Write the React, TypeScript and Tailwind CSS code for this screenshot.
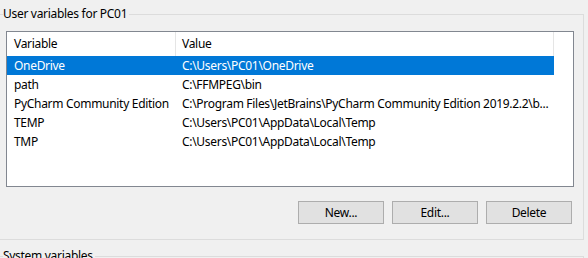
const rows = [
  { name: "OneDrive", value: "C:\\Users\\PC01\\OneDrive", selected: true },
  { name: "path", value: "C:\\FFMPEG\\bin" },
  {
    name: "PyCharm Community Edition",
    value: "C:\\Program Files\\JetBrains\\PyCharm Community Edition 2019.2.2\\b...",
  },
  { name: "TEMP", value: "C:\\Users\\PC01\\AppData\\Local\\Temp" },
  { name: "TMP", value: "C:\\Users\\PC01\\AppData\\Local\\Temp" },
];

function WinButton({ label }: { label: string }) {
  return (
    <button className="h-[23px] w-[86px] border border-[#adadad] bg-[#e1e1e1] text-[12px] text-black">
      {label}
    </button>
  );
}

export default function App() {
  return (
    <div
      className="h-[258px] w-[588px] overflow-hidden bg-[#f0f0f0] text-[12px] tracking-[-0.3px] text-black"
      style={{ fontFamily: "'Noto Sans', sans-serif" }}
    >
      <div className="relative -ml-px mt-[14px] h-[226px] w-[585px] border border-[#dcdcdc]">
        <span className="absolute -top-[9px] left-[3px] bg-[#f0f0f0] pr-[2px] leading-[16px]">
          User variables for PC01
        </span>

        <div className="ml-[6px] mt-[16px] h-[156px] w-[568px] border border-[#828790] bg-white">
          <div className="flex h-[24px] items-center">
            <div className="flex h-full w-[169px] items-center border-r border-[#e5e5e5] pl-[7px]">
              Variable
            </div>
            <div className="flex h-full w-[378px] items-center border-r border-[#e5e5e5] pl-[6px]">
              Value
            </div>
          </div>
          {rows.map((r) => (
            <div
              key={r.name}
              className={`flex h-[19px] w-[547px] items-center whitespace-nowrap ${
                r.selected ? "bg-[#0078d7] text-white" : ""
              }`}
            >
              <div className="w-[169px] overflow-hidden pl-[7px]">{r.name}</div>
              <div className="w-[378px] overflow-hidden pl-[6px]">{r.value}</div>
            </div>
          ))}
        </div>

        <div className="mt-[14px] flex justify-end gap-[8px] pr-[11px]">
          <WinButton label="New..." />
          <WinButton label="Edit..." />
          <WinButton label="Delete" />
        </div>
      </div>

      <div className="relative -ml-px mt-[16px] h-[60px] w-[585px] border border-[#dcdcdc]">
        <span className="absolute -top-[9px] left-[3px] bg-[#f0f0f0] pr-[2px] leading-[16px]">
          System variables
        </span>
      </div>
    </div>
  );
}
